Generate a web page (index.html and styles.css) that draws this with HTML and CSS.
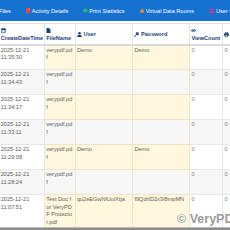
FILE: index.html
```html
<!DOCTYPE html>
<html lang="en">
<head>
<meta charset="utf-8">
<title>Activity Details</title>
<link rel="stylesheet" href="styles.css">
</head>
<body>
<div class="page">
  <nav class="nav">
    <div class="nav-item">
      <svg class="nav-icon" viewBox="0 0 10 9"><path d="M0 1h4l1 1h5v7H0z" fill="#f2c14e"/></svg>
      <span>Files</span>
    </div>
    <div class="nav-item">
      <svg class="nav-icon" viewBox="0 0 8 10"><path d="M0 0h5l3 3v7H0z" fill="#f0443a"/><path d="M5 0v3h3z" fill="#f8a29c"/></svg>
      <span>Activity Details</span>
    </div>
    <div class="nav-item">
      <svg class="nav-icon" viewBox="0 0 10 10"><rect x="2.5" y="0" width="5" height="3" fill="#2bc46a"/><rect x="0" y="3" width="10" height="4.5" rx="1" fill="#2bc46a"/><rect x="2.5" y="6" width="5" height="4" fill="#2bc46a" stroke="#1670d0" stroke-width="0.8"/></svg>
      <span>Print Statistics</span>
    </div>
    <div class="nav-item">
      <svg class="nav-icon" viewBox="0 0 10 9"><rect x="3.2" y="0.5" width="3.6" height="2.5" fill="none" stroke="#c98a4b" stroke-width="1"/><rect x="0" y="2.2" width="10" height="6.8" rx="1" fill="#c98a4b"/><rect x="4.2" y="4.6" width="1.6" height="1.6" fill="#f0c089"/></svg>
      <span>Virtual Data Rooms</span>
    </div>
    <div class="nav-item">
      <svg class="nav-icon nav-icon-wide" viewBox="0 0 12 10"><circle cx="4" cy="2.5" r="2.2" fill="#ff2a7f"/><path d="M0 9.6c0-2.7 1.8-4 4-4s4 1.3 4 4z" fill="#ff2a7f"/><circle cx="8.6" cy="2.8" r="1.8" fill="#ff2a7f"/><path d="M7.2 5.6c.4-.2.9-.3 1.4-.3 2 0 3.4 1.2 3.4 3.8H8.9c0-1.4-.6-2.7-1.7-3.5z" fill="#ff2a7f"/></svg>
      <span>User Management</span>
    </div>
  </nav>

  <div class="table-area">
    <table class="grid">
      <colgroup>
        <col class="w-date"><col class="w-file"><col class="w-user"><col class="w-pass"><col class="w-view"><col class="w-print">
      </colgroup>
      <thead>
        <tr>
          <th><svg class="hicon" viewBox="0 0 10 10"><rect x="0.7" y="1.7" width="8.6" height="7.6" rx="0.8" fill="none" stroke="currentColor" stroke-width="1.3"/><rect x="0.7" y="1.7" width="8.6" height="2.6" fill="currentColor"/><rect x="2.3" y="0" width="1.3" height="2.6" fill="currentColor"/><rect x="6.4" y="0" width="1.3" height="2.6" fill="currentColor"/><rect x="2.6" y="5.6" width="1.4" height="1.3" fill="currentColor"/><rect x="6" y="5.6" width="1.4" height="1.3" fill="currentColor"/></svg> CreateDateTime</th>
          <th><svg class="hicon" viewBox="0 0 8 10"><path d="M0 0h5l3 3v7H0z" fill="currentColor"/><path d="M5 0v3h3z" fill="#8fa3c4"/></svg> FileName</th>
          <th><svg class="hicon" viewBox="0 0 10 10"><circle cx="5" cy="2.7" r="2.5" fill="currentColor"/><path d="M0.3 10c0-3 2-4.6 4.7-4.6s4.7 1.6 4.7 4.6z" fill="currentColor"/></svg> User</th>
          <th><svg class="hicon" viewBox="0 0 10 10"><circle cx="6.6" cy="3.4" r="3.2" fill="currentColor"/><circle cx="7.4" cy="2.6" r="0.9" fill="#fff"/><path d="M5 5 L0.9 9.1" stroke="currentColor" stroke-width="1.7" fill="none"/><path d="M1.6 8.4 L2.8 9.6 M2.9 7.1 L4 8.2" stroke="currentColor" stroke-width="1.2"/></svg> Password</th>
          <th><svg class="hicon" viewBox="0 0 10 8"><path d="M0 4C1.8 0.6 8.2 0.6 10 4 8.2 7.4 1.8 7.4 0 4z" fill="currentColor"/><circle cx="5" cy="4" r="2.1" fill="#fff"/><circle cx="5" cy="4" r="1.2" fill="currentColor"/></svg> ViewCount</th>
          <th><svg class="hicon" viewBox="0 0 10 10"><rect x="2.4" y="0.5" width="5.2" height="3" fill="none" stroke="currentColor" stroke-width="1"/><rect x="0" y="3" width="10" height="4.6" rx="1" fill="currentColor"/><rect x="2.4" y="6" width="5.2" height="3.5" fill="#fff" stroke="currentColor" stroke-width="1"/></svg> PrintCount</th>
        </tr>
      </thead>
      <tbody>
        <tr><td>2025-12-21 11:35:30</td><td class="file">verypdf.pdf</td><td>Demo</td><td>Demo</td><td class="num">0</td><td class="num">0</td></tr>
        <tr><td>2025-12-21 11:34:43</td><td class="file">verypdf.pdf</td><td></td><td></td><td class="num">0</td><td class="num">0</td></tr>
        <tr><td>2025-12-21 11:34:17</td><td class="file">verypdf.pdf</td><td></td><td></td><td class="num">0</td><td class="num">0</td></tr>
        <tr><td>2025-12-21 11:33:11</td><td class="file">verypdf.pdf</td><td></td><td></td><td class="num">0</td><td class="num">0</td></tr>
        <tr><td>2025-12-21 11:29:08</td><td class="file">verypdf.pdf</td><td>Demo</td><td>Demo</td><td class="num">0</td><td class="num">0</td></tr>
        <tr><td>2025-12-21 11:28:24</td><td class="file">verypdf.pdf</td><td></td><td></td><td class="num">0</td><td class="num">0</td></tr>
        <tr><td>2025-12-21 11:07:51</td><td class="file">Test Doc for VeryPDF Protector.pdf</td><td>qo2eEGwNlUoiXtja</td><td>f9QdrtD2x3I8mpMN</td><td class="num">0</td><td class="num">0</td></tr>
      </tbody>
    </table>
  </div>
  <div class="hbar"></div>
  <div class="watermark">© VeryPDF</div>
</div>
</body>
</html>
```
FILE: styles.css
```css
* { box-sizing: border-box; }
html, body { margin: 0; padding: 0; background: #fff; }
body { font-family: "Liberation Sans", Arial, sans-serif; }

.page {
  position: relative;
  width: 230px;
  height: 230px;
  overflow: hidden;
  display: flex;
  flex-direction: column;
}

.nav {
  flex: 0 0 21px;
  display: flex;
  align-items: center;
  gap: 15px;
  margin-left: -7px;
  background: #1670d0;
  color: #fff;
  font-size: 5.6px;
  white-space: nowrap;
}
.nav-item { display: flex; align-items: center; gap: 1.5px; flex-shrink: 0; }
.nav-icon { width: 4.5px; height: 5.5px; flex-shrink: 0; }
.nav-icon-wide { width: 5.5px; }

.table-area {
  flex: 1 1 auto;
  min-height: 0;
  overflow: hidden;
  padding-top: 2px;
}

.grid {
  margin-left: -1.5px;
  border-collapse: collapse;
  table-layout: fixed;
  width: 264px;
  font-size: 5.6px;
  line-height: 7.6px;
  color: #5c5c5c;
}
.w-date { width: 45.5px; }
.w-file { width: 30.7px; }
.w-user { width: 57.5px; }
.w-pass { width: 57px; }
.w-view { width: 33px; }
.w-print { width: 40px; }

.grid th {
  height: 21px;
  padding: 3px 1.2px 1px;
  text-align: left;
  vertical-align: middle;
  font-weight: bold;
  color: #1c3f77;
  background: #fff;
  border: 1px solid #e4e4e4;
  border-bottom: 2px solid #dadada;
}
.hicon { width: 5px; height: 5px; vertical-align: -0.6px; color: #1c3f77; }

.grid td {
  height: 25px;
  padding: 1px 1.2px;
  vertical-align: top;
  border: 1px solid #e6e6e6;
  background: #fff;
}
.grid tbody tr:nth-child(even) td { background: #f6f6f6; }
.grid tbody td:nth-child(2),
.grid tbody td:nth-child(3),
.grid tbody td:nth-child(4) { background: #fef7de; border-color: #ede5c9; }
.grid td.file { word-break: break-all; }
.grid td.num { color: #808080; }

.hbar {
  flex: 0 0 3px;
  background: #8c8c8c;
  border-top: 1px solid #b8b8b8;
}

.watermark {
  position: absolute;
  left: 177px;
  top: 211.5px;
  font-size: 12.5px;
  line-height: 14px;
  font-weight: bold;
  white-space: nowrap;
  color: rgba(128, 128, 128, 0.8);
  text-shadow: 0 0 1px #fff, 0 0 1px #fff;
}
```
